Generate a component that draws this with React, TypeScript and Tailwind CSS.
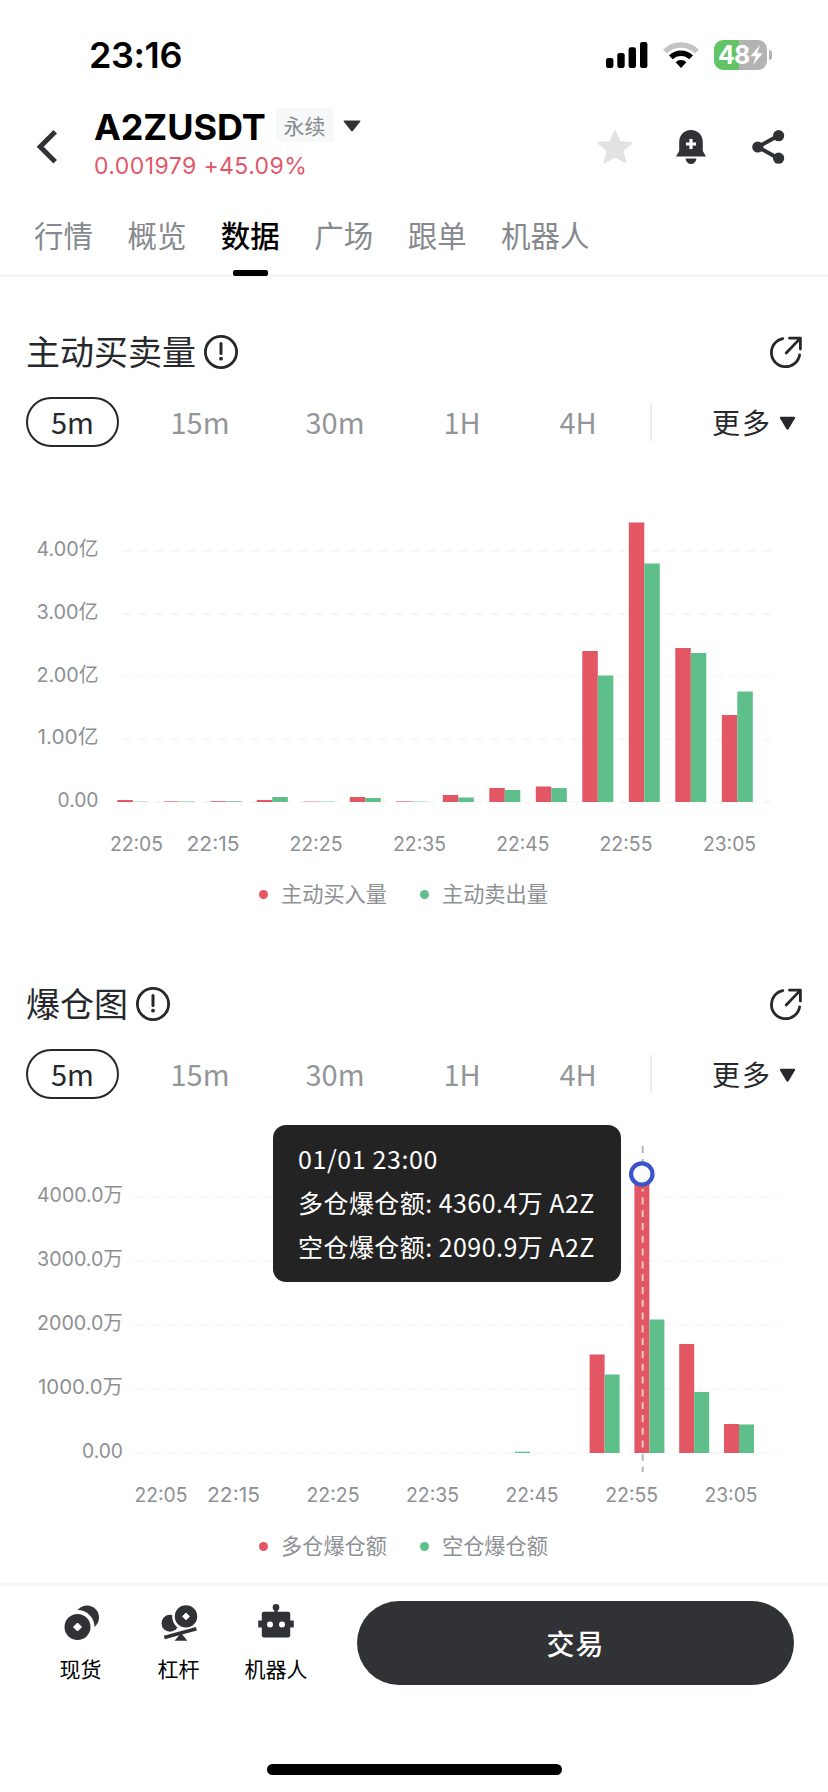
import React from 'react';
import clsx from 'clsx';

type Point = { buy: number; sell: number };

type ChartProps = {
  points: Point[];
  start: number;
  step: number;
  barWidth: number;
  baseline: number;
  gridStep: number;
  gridStart: number;
  yLabels: string[];
  yLabelWidths: number[];
  yLabelX: number;
  xLabels: { text: string; x: number }[];
  xLabelY: number;
  children?: React.ReactNode;
};

const TABS = ['行情', '概览', '数据', '广场', '跟单', '机器人'];

// bar heights are in chart pixels
const VOLUME: Point[] = [
  { buy: 2, sell: 0.3 },
  { buy: 0.6, sell: 0.5 },
  { buy: 0.8, sell: 0.7 },
  { buy: 2, sell: 5 },
  { buy: 0.4, sell: 0.4 },
  { buy: 5, sell: 4 },
  { buy: 0.6, sell: 0.4 },
  { buy: 7, sell: 4.5 },
  { buy: 14, sell: 12 },
  { buy: 15.5, sell: 14 },
  { buy: 151, sell: 126.5 },
  { buy: 279.5, sell: 238.5 },
  { buy: 154, sell: 149 },
  { buy: 87, sell: 110.5 },
];

const LIQUIDATION: Point[] = [
  { buy: 0, sell: 0 },
  { buy: 0, sell: 0 },
  { buy: 0, sell: 0 },
  { buy: 0, sell: 0 },
  { buy: 0, sell: 0 },
  { buy: 0, sell: 0 },
  { buy: 0, sell: 0 },
  { buy: 0, sell: 0 },
  { buy: 0, sell: 1.3 },
  { buy: 0, sell: 0 },
  { buy: 98.5, sell: 78.5 },
  { buy: 279, sell: 133.5 },
  { buy: 109, sell: 61 },
  { buy: 29, sell: 28.5 },
];

function StatusBar() {
  return (
    <div className="flex h-[110px] items-center justify-between pl-[89px] pr-[56px]">
      <span className="font-['Inter',sans-serif] text-[36px] font-semibold leading-none tracking-[-0.4px] text-black">23:16</span>
      <div className="flex items-center">
        <svg width="42" height="28" viewBox="0 0 42 28" fill="#000">
          <rect x="0" y="17" width="7.4" height="10" rx="2.2" />
          <rect x="11.3" y="12" width="7.4" height="15" rx="2.2" />
          <rect x="22.6" y="6.3" width="7.4" height="20.7" rx="2.2" />
          <rect x="34" y="1" width="7.4" height="26" rx="2.2" />
        </svg>
        <svg className="ml-[14px]" width="38" height="28" viewBox="0 0 38 28" fill="none" strokeWidth="5.4">
          <path d="M3 10.5A23 23 0 0 1 35 10.5" stroke="#c4c4c4" />
          <path d="M8.9 16.4A14.5 14.5 0 0 1 29.1 16.4" stroke="#000" />
          <path d="M13.6 21.2A7.8 7.8 0 0 1 24.4 21.2L19 27Z" fill="#000" stroke="none" />
        </svg>
        <div className="ml-[14px] flex items-center">
          <div className="flex h-[30px] w-[53px] items-center rounded-[9px] bg-[linear-gradient(to_right,#62c466_48%,#b3b3b3_48%)] pl-[4px]">
            <span className="font-['Inter',sans-serif] text-[25px] font-bold leading-none tracking-[-0.8px] text-white">48</span>
            <svg width="13" height="20" viewBox="0 0 13 20" fill="#fff">
              <path d="M10 0L0.5 11.3H5.8L3 20L12.6 8.3H7.2Z" />
            </svg>
          </div>
          <div className="ml-[2px] h-[10px] w-[3px] rounded-r-full bg-[#b3b3b3]" />
        </div>
      </div>
    </div>
  );
}

function Header() {
  return (
    <header className="flex h-[90px] justify-between pl-[36px] pr-[42px]">
      <div className="flex">
        <svg className="mt-[19px]" width="22" height="36" viewBox="0 0 22 36" fill="none" stroke="#303235" strokeWidth="5">
          <path d="M19.2 2.8L4.2 17.8L19.2 32.8" />
        </svg>
        <div className="ml-[36px] flex flex-col">
          <div className="-mt-[3px] flex h-[36px] items-center">
            <span className="pt-[3px] font-['Inter',sans-serif] text-[36px] font-bold leading-none tracking-[-0.1px] text-black">
              A2ZUSDT
            </span>
            <span className="ml-[10px] flex h-[34px] w-[58px] items-center justify-center rounded-[4px] bg-[#f7f8f9] text-[21px] leading-none text-[#868a8e]">
              永续
            </span>
            <svg className="ml-[9px] mt-[2px]" width="18" height="12" viewBox="0 0 18 12" fill="#303235">
              <path d="M1 0.5H17Q17.8 0.8 17.2 1.8L10 10.8Q9 11.8 8 10.8L0.8 1.8Q0.2 0.8 1 0.5Z" />
            </svg>
          </div>
          <div className="mt-[9px] font-['Inter',sans-serif] text-[23px] leading-[28px] tracking-[0.42px] text-[#e2586b]">
            0.001979 +45.09%
          </div>
        </div>
      </div>
      <div className="mt-[19px] flex h-[36px] items-center">
        <svg width="38" height="36" viewBox="0 0 38 36" fill="#e0e2e3" stroke="#e0e2e3" strokeWidth="2" strokeLinejoin="round">
          <path d="M19 2.5L23.5 13L35.5 14L26.3 21.6L29.5 33.2L19 27.5L8.5 33.2L11.7 21.6L2.5 14L14.5 13Z" />
        </svg>
        <svg className="ml-[41px]" width="32" height="36" viewBox="0 0 32 36">
          <path d="M16 1C9 1 4.2 6 4.2 13V22L1 27.6H31L27.8 22V13C27.8 6 23 1 16 1Z" fill="#303235" />
          <path d="M10.5 29.5H21.5C21 33 19 35 16 35S11 33 10.5 29.5Z" fill="#303235" />
          <path d="M16 10V20M11 15H21" stroke="#fff" strokeWidth="3.2" />
        </svg>
        <svg className="ml-[43px]" width="36" height="36" viewBox="0 0 36 36" fill="#303235">
          <path d="M28.5 6.5L8 18L28.5 29.5" fill="none" stroke="#303235" strokeWidth="4" />
          <circle cx="28.6" cy="6.7" r="5.6" />
          <circle cx="7.8" cy="18" r="5.6" />
          <circle cx="28.6" cy="29.2" r="5.6" />
        </svg>
      </div>
    </header>
  );
}

function Tabs() {
  return (
    <nav className="flex h-[77px] gap-[34.4px] border-b-[3px] border-[#f6f6f7] pl-[34px]">
      {TABS.map((tab) => {
        const active = tab === '数据';
        return (
          <div key={tab} className="flex h-[76px] flex-col items-center justify-between pt-[20px]">
            <span className={clsx('text-[29.5px] leading-[29px]', active ? 'font-medium text-black' : 'text-[#86898d]')}>{tab}</span>
            {active && <span className="h-[6px] w-[35px] rounded-[2px] bg-black" />}
          </div>
        );
      })}
    </nav>
  );
}

function PeriodPicker() {
  return (
    <div className="mt-[24px] flex h-[50px] items-center pl-[26px] text-[29px] leading-none text-[#939699]">
      <span className="flex h-[50px] w-[93px] items-center justify-center rounded-full border-2 border-[#26282c] pb-[2px] text-[#26282c]">
        5m
      </span>
      <span className="ml-[30px] w-[102px] pb-[2px] text-center">15m</span>
      <span className="ml-[33px] w-[102px] pb-[2px] text-center">30m</span>
      <span className="ml-[25px] w-[102px] pb-[2px] text-center">1H</span>
      <span className="ml-[14px] w-[102px] pb-[2px] text-center">4H</span>
      <span className="ml-[21px] h-[38px] w-[2px] bg-[#ededee]" />
      <span className="ml-[60px] pb-px text-[28px] tracking-[2px] text-[#26282c]">更多</span>
      <svg className="ml-[7px] mt-[2px]" width="17" height="15" viewBox="0 0 17 15" fill="#26282c">
        <path d="M1.6 0.8H15.4Q16.5 1 16 2.2L9.6 13Q8.5 14.4 7.4 13L1 2.2Q0.5 1 1.6 0.8Z" />
      </svg>
    </div>
  );
}

function SectionTitle({ title }: { title: string }) {
  return (
    <div className="flex h-[42px] items-center justify-between pl-[26px] pr-[24px]">
      <div className="flex items-center">
        <h2 className="pb-[2px] text-[34px] font-normal leading-none text-[#26282c]">{title}</h2>
        <svg className="ml-[7px]" width="36" height="36" viewBox="0 0 36 36" fill="none" stroke="#26282c">
          <circle cx="18" cy="18" r="15.6" strokeWidth="2.8" />
          <path d="M18 9.5V19.5" strokeWidth="3" strokeLinecap="round" />
          <circle cx="18" cy="24.7" r="1.9" fill="#26282c" stroke="none" />
        </svg>
      </div>
      <svg width="36" height="36" viewBox="0 0 36 36" fill="none" stroke="#26282c" strokeWidth="2.8" strokeLinecap="round" strokeLinejoin="round">
        <path d="M14.8 4.6A14.2 14.2 0 1 0 31.6 21" />
        <path d="M18.2 19L32 4.6M21.5 4.2H32.4V15" />
      </svg>
    </div>
  );
}

function BarChart(props: ChartProps) {
  const { points, start, step, barWidth, baseline, gridStep, gridStart, yLabels, yLabelWidths, yLabelX, xLabels, xLabelY } = props;

  return (
    <svg
      className="block font-['Inter','Noto_Sans_CJK_SC',sans-serif] text-[20px]"
      width="828"
      height="420"
      viewBox="0 0 828 420"
      fill="#8d9094"
    >
      {yLabels.map((label, i) => {
        const y = baseline - i * gridStep;
        return (
          <g key={label}>
            <line x1={gridStart} x2="778" y1={y} y2={y} stroke="#f5f5f6" strokeWidth="1.5" strokeDasharray="8 8" />
            <text x={yLabelX} y={y + 5} textAnchor="end" textLength={yLabelWidths[i]} lengthAdjust="spacingAndGlyphs">
              {label}
            </text>
          </g>
        );
      })}
      {points.map((p, i) => {
        const x = start + i * step;
        return (
          <g key={i}>
            <rect x={x} y={baseline - p.buy} width={barWidth} height={p.buy} fill="#e35764" />
            <rect x={x + barWidth} y={baseline - p.sell} width={barWidth} height={p.sell} fill="#5fbf8b" />
          </g>
        );
      })}
      {xLabels.map((l) => (
        <text key={l.text} x={l.x} y={xLabelY} textAnchor="middle" textLength="53" lengthAdjust="spacingAndGlyphs">
          {l.text}
        </text>
      ))}
      {props.children}
    </svg>
  );
}

function Legend({ buy, sell }: { buy: string; sell: string }) {
  return (
    <div className="flex h-[54px] items-center pl-[259px] text-[21.2px] leading-none text-[#8d9094]">
      <span className="h-[9px] w-[9px] rounded-full bg-[#e35764]" />
      <span className="ml-[13px] pb-[2px]">{buy}</span>
      <span className="ml-[33px] h-[9px] w-[9px] rounded-full bg-[#5fbf8b]" />
      <span className="ml-[13px] pb-[2px]">{sell}</span>
    </div>
  );
}

function BottomBar() {
  return (
    <footer className="h-[209px] border-t-[3px] border-[#f8f8f8]">
      <div className="flex pt-[15px]">
        <div className="ml-[59px] flex w-[43px] flex-col items-center">
          <svg width="40" height="40" viewBox="0 0 40 40" fill="#303235">
            <circle cx="26" cy="16.4" r="12" />
            <circle cx="16.5" cy="26" r="17" fill="#fff" />
            <circle cx="16.5" cy="26" r="13" />
            <path d="M16.5 22L20.5 26L16.5 30L12.5 26Z" fill="#fff" stroke="#fff" />
          </svg>
          <span className="mt-[17px] text-[21px] leading-none text-black">现货</span>
        </div>
        <div className="ml-[55px] flex w-[43px] flex-col items-center">
          <svg width="40" height="40" viewBox="0 0 40 40" fill="#303235">
            <circle cx="11" cy="22.2" r="8.5" />
            <circle cx="27" cy="15.4" r="13.8" fill="#fff" />
            <circle cx="27" cy="15.4" r="11.2" />
            <path d="M27 12L30.4 15.4L27 18.8L23.6 15.4Z" fill="#fff" stroke="#fff" />
            <path d="M5.3 36.4L37.4 27.8" stroke="#303235" strokeWidth="3.6" />
            <path d="M22 32L28.4 39.8H15.6Z" />
          </svg>
          <span className="mt-[17px] text-[21px] leading-none text-black">杠杆</span>
        </div>
        <div className="ml-[44px] flex w-[64px] flex-col items-center">
          <svg width="40" height="40" viewBox="0 0 40 40" fill="#303235">
            <circle cx="20" cy="6.4" r="3.3" />
            <path d="M18.4 8H21.6V12H18.4Z" />
            <rect x="5.8" y="10.8" width="28.4" height="25.6" rx="1.8" />
            <rect x="2.2" y="19.4" width="35.6" height="7" rx="1" />
            <circle cx="14" cy="23.6" r="3" fill="#fff" />
            <circle cx="26" cy="23.6" r="3" fill="#fff" />
          </svg>
          <span className="mt-[17px] text-[21px] leading-none text-black">机器人</span>
        </div>
        <button className="ml-[49px] flex h-[84px] w-[437px] items-center justify-center rounded-full bg-[#303235] text-[28px] font-medium leading-none tracking-[1px] text-white">
          交易
        </button>
      </div>
      <div className="mx-auto mt-[79px] h-[11px] w-[295px] rounded-full bg-black" />
    </footer>
  );
}

export default function App() {
  return (
    <div className="flex h-[1792px] w-[828px] flex-col overflow-hidden bg-white font-['Noto_Sans_CJK_SC',sans-serif]">
      <StatusBar />
      <Header />
      <Tabs />

      <section className="h-[652px] pt-[54px]">
        <SectionTitle title="主动买卖量" />
        <PeriodPicker />
        <BarChart
          points={VOLUME}
          start={117.3}
          step={46.5}
          barWidth={15.5}
          baseline={355}
          gridStep={62.7}
          gridStart={123}
          yLabels={['0.00', '1.00亿', '2.00亿', '3.00亿', '4.00亿']}
          yLabelWidths={[41, 61, 62, 62, 62]}
          yLabelX={98.5}
          xLabels={[
            { text: '22:05', x: 136.5 },
            { text: '22:15', x: 213 },
            { text: '22:25', x: 316 },
            { text: '22:35', x: 419.5 },
            { text: '22:45', x: 522.8 },
            { text: '22:55', x: 626 },
            { text: '23:05', x: 729.5 },
          ]}
          xLabelY={403.7}
        />
        <Legend buy="主动买入量" sell="主动卖出量" />
      </section>

      <section className="h-[654px] pt-[54px]">
        <SectionTitle title="爆仓图" />
        <PeriodPicker />
        <div className="relative">
          <BarChart
            points={LIQUIDATION}
            start={141.6}
            step={44.8}
            barWidth={15}
            baseline={354}
            gridStep={64}
            gridStart={134}
            yLabels={['0.00', '1000.0万', '2000.0万', '3000.0万', '4000.0万']}
            yLabelWidths={[41, 85, 86, 86, 86]}
            yLabelX={123}
            xLabels={[
              { text: '22:05', x: 161 },
              { text: '22:15', x: 233.5 },
              { text: '22:25', x: 333 },
              { text: '22:35', x: 432.5 },
              { text: '22:45', x: 532 },
              { text: '22:55', x: 631.7 },
              { text: '23:05', x: 731 },
            ]}
            xLabelY={403}
          >
            <line x1="642.7" x2="642.7" y1="47" y2="75" stroke="#b4b6ba" strokeWidth="2" strokeDasharray="7 5.8" />
            <line x1="642.7" x2="642.7" y1="90" y2="354" stroke="#e6c9bf" strokeWidth="2" strokeDasharray="7 5.8" strokeDashoffset="4.4" />
            <line x1="642.7" x2="642.7" y1="354" y2="373" stroke="#b4b6ba" strokeWidth="2" strokeDasharray="7 5.8" strokeDashoffset="12" />
            <circle cx="641.8" cy="75" r="10.7" fill="#fafcff" stroke="#3a54cb" strokeWidth="4.2" />
          </BarChart>
          <div className="absolute left-[273px] top-[26px] flex h-[157px] w-[348px] flex-col rounded-[13px] bg-[#232323] pl-[25px] pt-[11px] text-[25px] leading-[44px] tracking-[0.45px] text-white">
            <span className="tracking-[0.6px]">01/01 23:00</span>
            <span>多仓爆仓额: 4360.4万 A2Z</span>
            <span>空仓爆仓额: 2090.9万 A2Z</span>
          </div>
        </div>
        <Legend buy="多仓爆仓额" sell="空仓爆仓额" />
      </section>

      <BottomBar />
    </div>
  );
}
